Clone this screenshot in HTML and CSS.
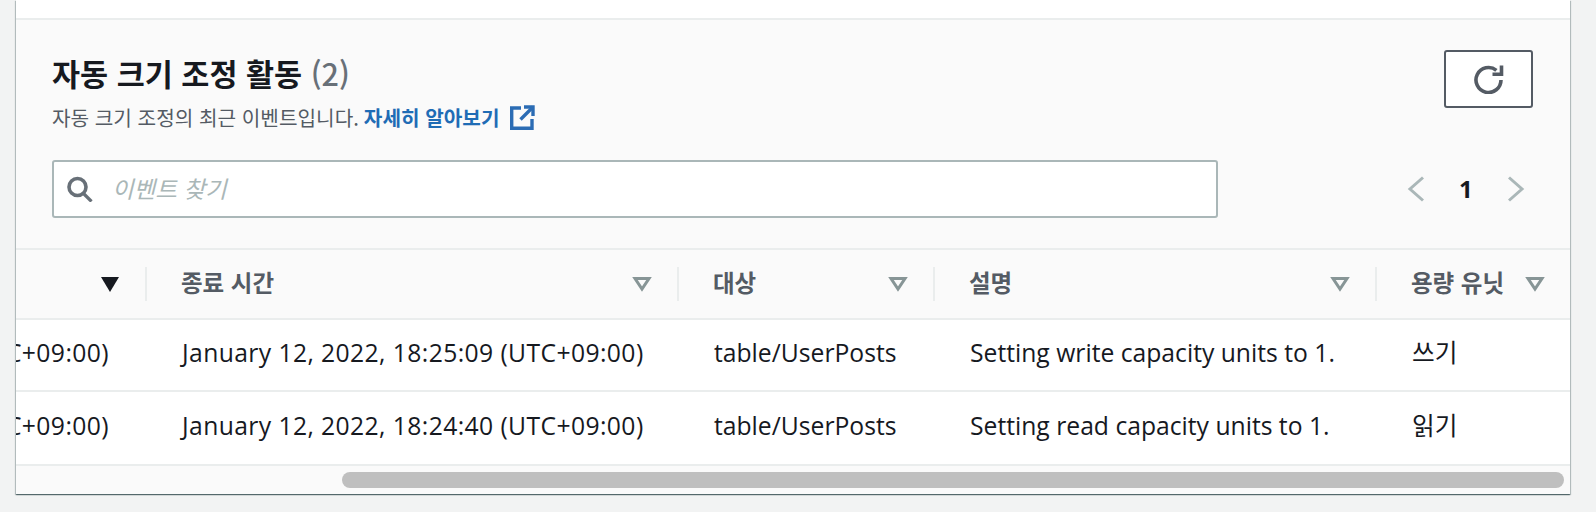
FILE: index.html
```html
<!DOCTYPE html>
<html lang="ko">
<head>
<meta charset="utf-8">
<title>자동 크기 조정 활동</title>
<link rel="stylesheet" href="styles.css">
</head>
<body>
<section class="card">
  <div class="card-top"></div>
  <header class="panel-head">
    <div class="head-row">
      <div>
        <h2 class="title">자동 크기 조정 활동 <span class="count">(2)</span></h2>
        <p class="desc"><span>자동 크기 조정의 최근 이벤트입니다.</span><a class="link" href="#">자세히 알아보기</a>
          <svg class="ext-icon" viewBox="0 0 25 25" fill="none" stroke="#2b6cb4" stroke-width="3.400"><path d="M11 3H1.700v20.300H22V14"/><path d="M14 2h9v9"/><path d="M23 2 10.500 14.500"/></svg>
        </p>
      </div>
      <button class="refresh" type="button" aria-label="새로 고침">
        <svg viewBox="0 0 32 30" width="32" height="30" fill="none" stroke="#545b64" stroke-width="3.600"><path d="M28 16a12.500 12.500 0 1 1-4.600-9.700"/><path d="M28.500 1.500v8.800h-9"/></svg>
      </button>
    </div>
    <div class="tools">
      <label class="search">
        <svg class="search-icon" viewBox="0 0 28 26" fill="none" stroke="#687078"><circle cx="11.500" cy="11" r="8.500" stroke-width="3.600"/><path d="m17.500 17.500 8 8" stroke-width="3.200"/></svg>
        <span class="placeholder">이벤트 찾기</span>
      </label>
      <nav class="pager">
        <svg class="chev" viewBox="0 0 18 26" fill="none" stroke="#aab7b8" stroke-width="3"><path d="M16 1.500 3 13l13 11.500"/></svg>
        <span class="page">1</span>
        <svg class="chev" viewBox="0 0 18 26" fill="none" stroke="#aab7b8" stroke-width="3"><path d="M2 1.500 15 13 2 24.500"/></svg>
      </nav>
    </div>
  </header>
  <div class="table">
    <div class="row head">
      <div class="th first"><svg class="sort" viewBox="0 0 20 16"><path d="M1 1h18l-9 15z" fill="#16191f"/></svg></div>
      <div class="th"><span class="th-label">종료 시간</span><svg class="sort" viewBox="0 0 20 16" fill="none" stroke="#879596" stroke-width="3"><path d="M3 2.500h14l-7 10.500z"/></svg></div>
      <div class="th"><span class="th-label">대상</span><svg class="sort" viewBox="0 0 20 16" fill="none" stroke="#879596" stroke-width="3"><path d="M3 2.500h14l-7 10.500z"/></svg></div>
      <div class="th"><span class="th-label">설명</span><svg class="sort" viewBox="0 0 20 16" fill="none" stroke="#879596" stroke-width="3"><path d="M3 2.500h14l-7 10.500z"/></svg></div>
      <div class="th"><span class="th-label">용량 유닛</span><svg class="sort" viewBox="0 0 20 16" fill="none" stroke="#879596" stroke-width="3"><path d="M3 2.500h14l-7 10.500z"/></svg></div>
    </div>
    <div class="row body">
      <div class="td clip"><span>C+09:00)</span></div>
      <div class="td date">January 12, 2022, 18:25:09 (UTC+09:00)</div>
      <div class="td">table/UserPosts</div>
      <div class="td">Setting write capacity units to 1.</div>
      <div class="td">쓰기</div>
    </div>
    <div class="row body">
      <div class="td clip"><span>C+09:00)</span></div>
      <div class="td date">January 12, 2022, 18:24:40 (UTC+09:00)</div>
      <div class="td">table/UserPosts</div>
      <div class="td">Setting read capacity units to 1.</div>
      <div class="td">읽기</div>
    </div>
  </div>
  <div class="scroll-track"><div class="scroll-thumb"></div></div>
</section>
</body>
</html>
```
FILE: styles.css
```css
* { box-sizing: border-box; }
html, body { margin: 0; height: 512px; overflow: hidden; }
body {
  background: #f2f3f3;
  padding: 0 26px 0 16px;
  font-family: "Open Sans", "Noto Sans CJK KR", sans-serif;
  color: #16191f;
}
.card {
  height: 494px;
  background: #fafafa;
  box-shadow: 0 1px 1px 0 rgba(0, 28, 36, .45), 1px 1px 1px 0 rgba(0, 28, 36, .2), -1px 1px 1px 0 rgba(0, 28, 36, .2);
}
.card-top { height: 20px; background: #fff; border-bottom: 2px solid #eaeded; }
.panel-head { height: 228px; padding: 30px 37px 0 36px; }
.head-row { display: flex; justify-content: space-between; align-items: flex-start; }
.title { margin: 3px 0 0; font: 700 30.500px/40px "Noto Sans CJK KR", sans-serif; color: #16191f; }
.count { font-weight: 500; color: #687078; }
.desc { margin: 12px 0 0; display: flex; align-items: center; font: 400 20.200px/24px "Noto Sans CJK KR", sans-serif; color: #545b64; white-space: nowrap; }
.link { margin-left: 5px; color: #1f6cb5; font-weight: 700; text-decoration: none; }
.ext-icon { margin-left: 10px; width: 25px; height: 25px; }
.refresh { width: 89px; height: 58px; padding: 0; display: flex; align-items: center; justify-content: center; background: #fff; border: 2px solid #545b64; border-radius: 3px; }
.tools { display: flex; align-items: center; margin-top: 30px; }
.search { width: 1166px; height: 58px; display: flex; align-items: center; padding-left: 12px; background: #fff; border: 2px solid #aab7b8; border-radius: 3px; }
.search-icon { width: 28px; height: 26px; }
.placeholder { margin-left: 18px; font: italic 400 23.500px/1 "Noto Sans CJK KR", sans-serif; color: #aab7b8; }
.pager { margin-left: 189px; display: flex; align-items: center; gap: 35px; }
.chev { width: 18px; height: 26px; }
.page { margin-left: -1px; font: 700 24px/1 "Open Sans", sans-serif; width: 13px; }
.table { background: #fff; }
.row { display: grid; grid-template-columns: 129px 532px 256px 442px 195px; }
.head { height: 72px; align-items: center; background: #fafafa; border-top: 2px solid #eaeded; border-bottom: 2px solid #eaeded; }
.body { border-bottom: 2px solid #eaeded; }
.body:nth-child(2) { height: 72px; }
.body:nth-child(3) { height: 74px; }
.th { height: 34px; display: flex; align-items: center; justify-content: space-between; padding: 0 25px 0 34px; border-left: 2px solid #eaeded; font: 700 23.500px/1 "Noto Sans CJK KR", sans-serif; color: #545b64; }
.th.first { border-left: 0; justify-content: flex-end; padding-right: 25px; }
.th-label { margin-bottom: 2px; }
.sort { width: 20px; height: 16px; }
.td { display: flex; align-items: center; padding: 0 0 3px 37px; font: 400 24.700px/1 "Open Sans", "Noto Sans CJK KR", sans-serif; white-space: nowrap; color: #16191f; }
.date { letter-spacing: .4px; }
.td.clip { padding: 0 36px 3px 0; justify-content: flex-end; overflow: hidden; letter-spacing: .4px; }
.td.clip span { flex: none; }
.scroll-track { padding: 6px 6px 0 326px; }
.scroll-thumb { height: 16px; border-radius: 8px; background: #bfbfbf; }
```
